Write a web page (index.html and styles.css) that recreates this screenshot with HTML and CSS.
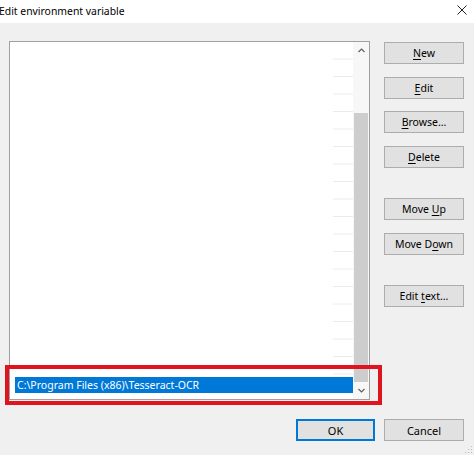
FILE: index.html
```html
<!DOCTYPE html>
<html lang="en">
<head>
<meta charset="utf-8">
<title>Edit environment variable</title>
<link rel="stylesheet" href="styles.css">
</head>
<body>
<div class="window">
  <div class="titlebar">
    <span class="title">Edit environment variable</span>
    <svg class="close" width="10" height="10" viewBox="0 0 10 10"><path d="M0.5 0.5 L9.5 9.5 M9.5 0.5 L0.5 9.5" stroke="#222" stroke-width="1" fill="none"/></svg>
  </div>
  <div class="content">
    <div class="main">
      <div class="listbox">
        <div class="list-area">
          <div class="rows"><div class="row-lines"></div></div>
          <div class="edit-row">C:\Program Files (x86)\Tesseract-OCR</div>
        </div>
        <div class="scrollbar">
          <div class="arrow"><svg width="7" height="5" viewBox="0 0 7 5"><path d="M0.5 4 L3.5 1 L6.5 4" stroke="#606060" stroke-width="1.2" fill="none"/></svg></div>
          <div class="track"><div class="thumb"></div></div>
          <div class="arrow"><svg width="7" height="5" viewBox="0 0 7 5"><path d="M0.5 1 L3.5 4 L6.5 1" stroke="#606060" stroke-width="1.2" fill="none"/></svg></div>
        </div>
      </div>
      <div class="buttons">
        <button class="btn"><span><u>N</u>ew</span></button>
        <button class="btn"><span><u>E</u>dit</span></button>
        <button class="btn"><span><u>B</u>rowse...</span></button>
        <button class="btn"><span><u>D</u>elete</span></button>
        <button class="btn group-start"><span>Move <u>U</u>p</span></button>
        <button class="btn"><span>Move D<u>o</u>wn</span></button>
        <button class="btn group-start"><span>Edit <u>t</u>ext...</span></button>
      </div>
    </div>
    <div class="footer">
      <button class="btn btn-ok"><span>OK</span></button>
      <button class="btn btn-cancel"><span>Cancel</span></button>
    </div>
  </div>
  <div class="highlight"></div>
  <svg class="grip" width="8" height="8" viewBox="0 0 8 8">
    <rect x="6" y="0" width="1" height="1" fill="#b8b8b8"/>
    <rect x="3" y="3" width="1" height="1" fill="#b8b8b8"/>
    <rect x="6" y="3" width="1" height="1" fill="#b8b8b8"/>
    <rect x="0" y="6" width="1" height="1" fill="#b8b8b8"/>
    <rect x="3" y="6" width="1" height="1" fill="#b8b8b8"/>
    <rect x="6" y="6" width="1" height="1" fill="#b8b8b8"/>
  </svg>
</div>
</body>
</html>
```

FILE: styles.css
```css
html, body {
  margin: 0;
  padding: 0;
}

body {
  width: 474px;
  height: 455px;
  overflow: hidden;
  background: #f0f0f0;
  font-family: "Noto Sans", "Open Sans", sans-serif;
  font-size: 10.5px;
  color: #000;
}

.window {
  position: relative;
  width: 474px;
  height: 455px;
  display: flex;
  flex-direction: column;
  background: #f0f0f0;
}

.titlebar {
  height: 23px;
  box-sizing: border-box;
  background: #fff;
  display: flex;
  justify-content: space-between;
  align-items: flex-start;
  padding: 3px 7px 0 0;
}

.title {
  font-size: 10.4px;
  line-height: 16px;
  margin-left: -1px;
  color: #000;
}

.close {
  margin-top: 2px;
}

.content {
  flex: 1;
  display: flex;
  flex-direction: column;
  padding: 18px 10px 0 9px;
}

.main {
  display: flex;
  gap: 14px;
}

.listbox {
  width: 361px;
  height: 359px;
  box-sizing: border-box;
  border: 1px solid #a0a0a0;
  background: #fff;
  display: flex;
}

.list-area {
  flex: 1;
  display: flex;
  flex-direction: column;
  padding-left: 5px;
}

.rows {
  flex: 1;
  display: flex;
  justify-content: flex-end;
}

.row-lines {
  width: 20px;
  background-image: linear-gradient(to bottom, transparent 17px, #ebebeb 17px, #ebebeb 18px, transparent 18px);
  background-size: 100% 17.5px;
}

.edit-row {
  height: 16px;
  margin-bottom: 6px;
  background: #0078d7;
  color: #fff;
  font-size: 10.5px;
  line-height: 16px;
  padding-left: 2px;
  white-space: nowrap;
}

.scrollbar {
  width: 16px;
  display: flex;
  flex-direction: column;
  background: #f7f7f7;
}

.arrow {
  height: 17px;
  display: flex;
  align-items: center;
  justify-content: center;
}

.track {
  flex: 1;
  display: flex;
  flex-direction: column;
  padding-top: 54px;
}

.thumb {
  flex: 1;
  margin: 0 1px;
  background: #cdcdcd;
}

.buttons {
  width: 80px;
  display: flex;
  flex-direction: column;
  padding-top: 1px;
}

.btn {
  height: 22px;
  box-sizing: border-box;
  margin: 0 0 12.5px 0;
  padding: 0;
  border: 1px solid #adadad;
  background: #e1e1e1;
  font: inherit;
  color: #000;
  display: flex;
  align-items: center;
  justify-content: center;
  white-space: nowrap;
}

.btn u {
  text-decoration-thickness: 1px;
  text-underline-offset: 1.5px;
}

.btn.group-start {
  margin-top: 18px;
}

.footer {
  display: flex;
  justify-content: flex-end;
  gap: 9px;
  padding-top: 19px;
}

.footer .btn {
  margin: 0;
  font-size: 11px;
}

.btn-ok {
  width: 79px;
  border: 2px solid #0078d7;
}

.btn-cancel {
  width: 80px;
}

.highlight {
  position: absolute;
  left: 5px;
  top: 365px;
  width: 377px;
  height: 40px;
  box-sizing: border-box;
  border: 4px solid #e0141e;
}

.grip {
  position: absolute;
  right: 1px;
  bottom: 1px;
}
```
